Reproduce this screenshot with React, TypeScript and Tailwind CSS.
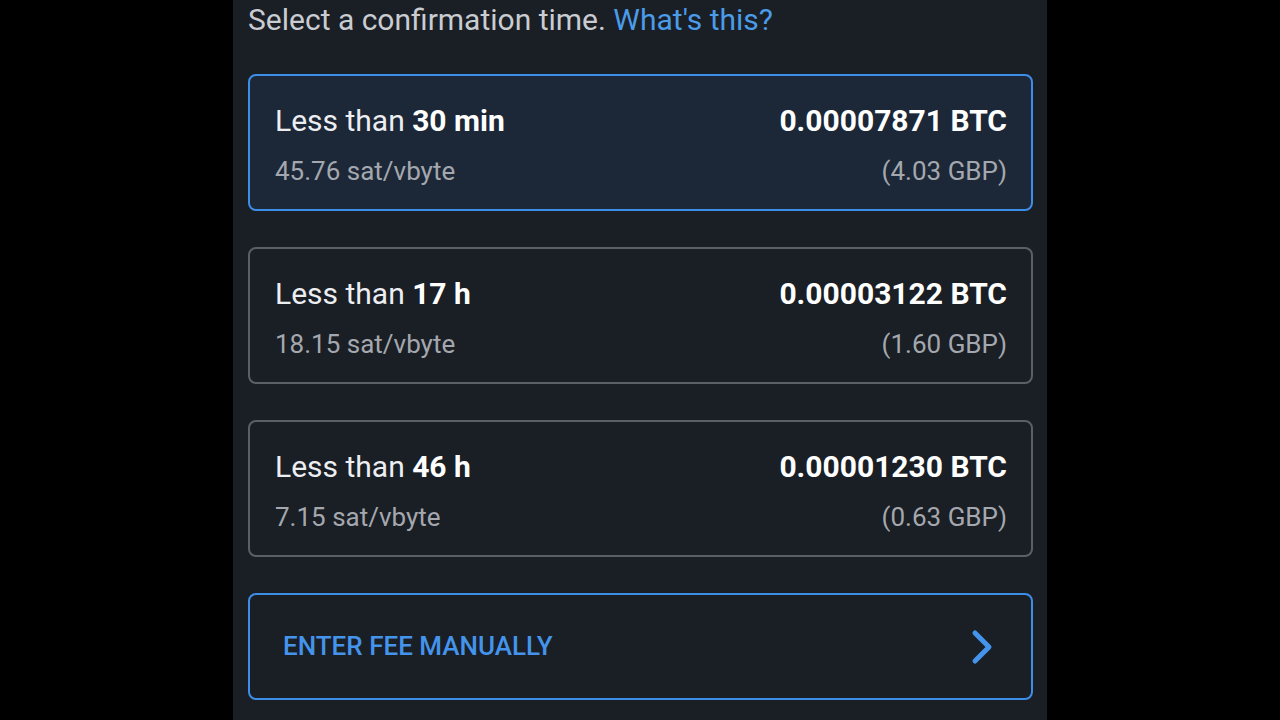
import React from 'react';

const fees = [
  { time: '30 min', rate: '45.76', btc: '0.00007871', gbp: '4.03', selected: true },
  { time: '17 h', rate: '18.15', btc: '0.00003122', gbp: '1.60', selected: false },
  { time: '46 h', rate: '7.15', btc: '0.00001230', gbp: '0.63', selected: false },
];

export default function App() {
  return (
    <div className="w-[1280px] h-[720px] bg-black flex justify-center overflow-hidden" style={{ fontFamily: 'Roboto, "Liberation Sans", sans-serif' }}>
      <div className="w-[814px] h-full bg-[#1a1e25] pl-[15px] pr-[14px]">
        <p className="h-[40px] leading-[40px] text-[30px] text-[#c9ccd1]">
          Select a confirmation time. <span className="text-[#4a9be8]">What's this?</span>
        </p>
        <div className="mt-[34px] flex flex-col gap-[36px]">
          {fees.map((f) => (
            <div
              key={f.time}
              className={
                f.selected
                  ? 'h-[137px] rounded-[8px] border-2 border-[#3d8ee8] bg-[#1c2737] pl-[25px] pr-[24px] flex justify-between items-center'
                  : 'h-[137px] rounded-[8px] border-2 border-[#5a5f68] bg-[#1a1e25] pl-[25px] pr-[24px] flex justify-between items-center'
              }
            >
              <div className="flex flex-col gap-[16px] pt-[4px]">
                <span className="text-[30px] leading-[36px] text-[#eceef1]">
                  Less than <span className="font-bold text-white">{f.time}</span>
                </span>
                <span className="text-[26px] leading-[32px] text-[#a4a8ae]">{f.rate} sat/vbyte</span>
              </div>
              <div className="flex flex-col items-end gap-[16px] pt-[4px]">
                <span className="text-[30px] leading-[36px] font-bold text-white">{f.btc} BTC</span>
                <span className="text-[26px] leading-[32px] text-[#a4a8ae]">({f.gbp} GBP)</span>
              </div>
            </div>
          ))}
          <div className="h-[107px] rounded-[8px] border-2 border-[#3d8ee8] flex items-center justify-between pl-[33px] pr-[38px]">
            <span className="text-[26px] font-medium text-[#4394ea]">ENTER FEE MANUALLY</span>
            <svg width="22" height="36" viewBox="0 0 22 36" fill="none">
              <path d="M4 4 L18 18 L4 32" stroke="#4394ea" strokeWidth="5" strokeLinecap="round" strokeLinejoin="round" />
            </svg>
          </div>
        </div>
      </div>
    </div>
  );
}
